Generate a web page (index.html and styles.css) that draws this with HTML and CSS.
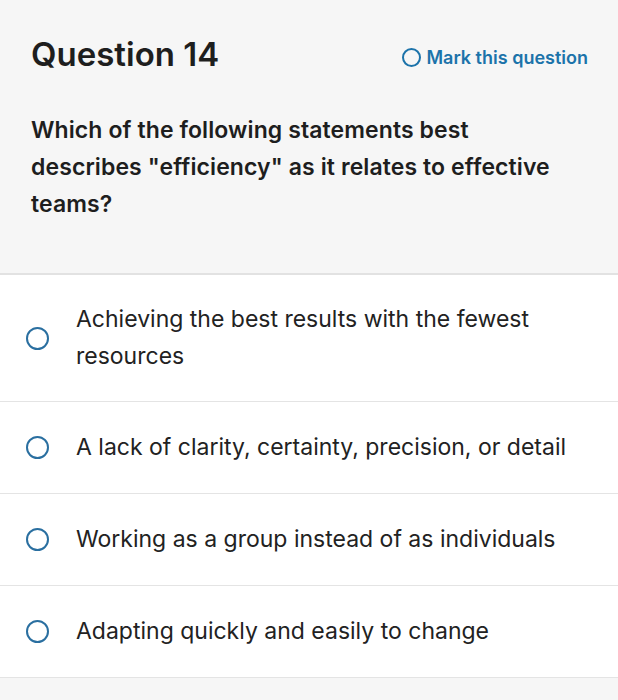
FILE: index.html
```html
<!DOCTYPE html>
<html lang="en">
<head>
    <meta charset="UTF-8">
    <meta name="viewport" content="width=device-width, initial-scale=1.0">
    <title>Question 14</title>
    <link rel="stylesheet" href="styles.css">
</head>
<body>
    <div class="question-header">
        <div class="title-row">
            <h1>Question 14</h1>
            <button class="mark-btn"><span class="mark-circle"></span>Mark this question</button>
        </div>
        <p class="prompt">Which of the following statements best describes "efficiency" as it relates to effective teams?</p>
    </div>

    <ul class="options">
        <li class="option">
            <span class="radio"></span>
            <span class="option-text">Achieving the best results with the fewest resources</span>
        </li>
        <li class="option">
            <span class="radio"></span>
            <span class="option-text">A lack of clarity, certainty, precision, or detail</span>
        </li>
        <li class="option">
            <span class="radio"></span>
            <span class="option-text">Working as a group instead of as individuals</span>
        </li>
        <li class="option">
            <span class="radio"></span>
            <span class="option-text">Adapting quickly and easily to change</span>
        </li>
    </ul>
</body>
</html>
```

FILE: styles.css
```css
body {
    margin: 0;
    background-color: #f6f6f6;
    font-family: "Inter", "Liberation Sans", sans-serif;
    color: #1e1e1e;
}
.question-header {
    padding: 30px 30px 50px 31px;
    border-bottom: 2px solid #e2e2e2;
}
.title-row {
    display: flex;
    align-items: center;
    justify-content: space-between;
}
h1 {
    margin: 0;
    font-size: 33px;
    font-weight: 600;
    line-height: 48px;
}
.mark-btn {
    display: flex;
    align-items: center;
    gap: 5px;
    padding: 0;
    border: none;
    background: none;
    font-family: inherit;
    font-size: 18px;
    font-weight: 600;
    color: #1c73aa;
    margin-top: 6px;
}
.mark-circle {
    width: 15px;
    height: 15px;
    border: 2px solid #1c73aa;
    border-radius: 50%;
}
.prompt {
    max-width: 535px;
    margin: 34px 0 0 0;
    font-size: 23px;
    font-weight: 600;
    line-height: 37px;
    letter-spacing: 0.1px;
}
.options {
    list-style: none;
    margin: 0;
    padding: 0;
    background: #fff;
}
.option {
    box-sizing: border-box;
    min-height: 92px;
    display: flex;
    align-items: center;
    padding: 26px 50px 26px 26px;
    border-bottom: 1px solid #e4e4e4;
}
.radio {
    flex: none;
    width: 19px;
    height: 19px;
    border: 2.5px solid #2a6fa0;
    border-radius: 50%;
    margin-right: 27px;
}
.option-text {
    font-size: 23px;
    line-height: 37px;
    color: #222;
}
```
